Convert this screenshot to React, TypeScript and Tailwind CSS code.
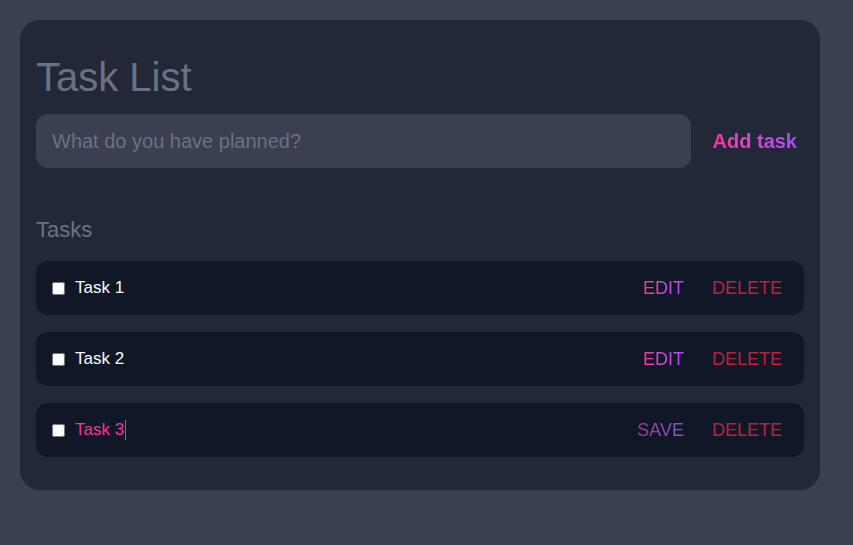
const tasks = [
  { id: 1, name: "Task 1", editing: false },
  { id: 2, name: "Task 2", editing: false },
  { id: 3, name: "Task 3", editing: true },
];

function TaskRow({ name, editing }: { name: string; editing: boolean }) {
  return (
    <li className="flex h-[54px] items-center rounded-xl bg-gray-900 pl-4 pr-[22px]">
      <input type="checkbox" className="h-[13px] w-[13px]" />
      {editing ? (
        <span className="ml-2.5 flex items-center text-[17px] text-pink-500">
          {name}
          <span className="ml-px h-[20px] w-px bg-pink-500" />
        </span>
      ) : (
        <span className="ml-2.5 text-[17px] text-gray-50">{name}</span>
      )}
      <div className="ml-auto flex items-center gap-7 text-lg">
        {editing ? (
          <button className="bg-gradient-to-r from-[#a8378a] to-[#7b55d6] bg-clip-text text-transparent">
            SAVE
          </button>
        ) : (
          <button className="bg-gradient-to-r from-pink-500 to-purple-500 bg-clip-text text-transparent">
            EDIT
          </button>
        )}
        <button className="text-[#b9213f]">DELETE</button>
      </div>
    </li>
  );
}

export default function App() {
  return (
    <div
      className="min-h-[545px] bg-[#3a3f52] p-5"
      style={{ fontFamily: '"Liberation Sans", Arial, sans-serif' }}
    >
      <div className="w-[800px] rounded-[20px] bg-[#222838] px-4 pt-[33px] pb-[33px]">
        <h1 className="text-[40px] leading-[48px] text-gray-500">Task List</h1>

        <form className="mt-[13px] flex items-center" onSubmit={(e) => e.preventDefault()}>
          <input
            type="text"
            placeholder="What do you have planned?"
            className="h-[54px] flex-1 rounded-xl bg-[#3a3f52] px-4 text-xl text-gray-200 outline-none placeholder:text-gray-500"
          />
          <button
            type="submit"
            className="ml-[22px] mr-[7px] bg-gradient-to-r from-pink-500 to-purple-500 bg-clip-text text-xl font-bold text-transparent"
          >
            Add task
          </button>
        </form>

        <h2 className="mt-[48px] text-[22px] leading-7 text-gray-500">Tasks</h2>

        <ul className="mt-[17px] flex flex-col gap-[17px]">
          {tasks.map((t) => (
            <TaskRow key={t.id} name={t.name} editing={t.editing} />
          ))}
        </ul>
      </div>
    </div>
  );
}
